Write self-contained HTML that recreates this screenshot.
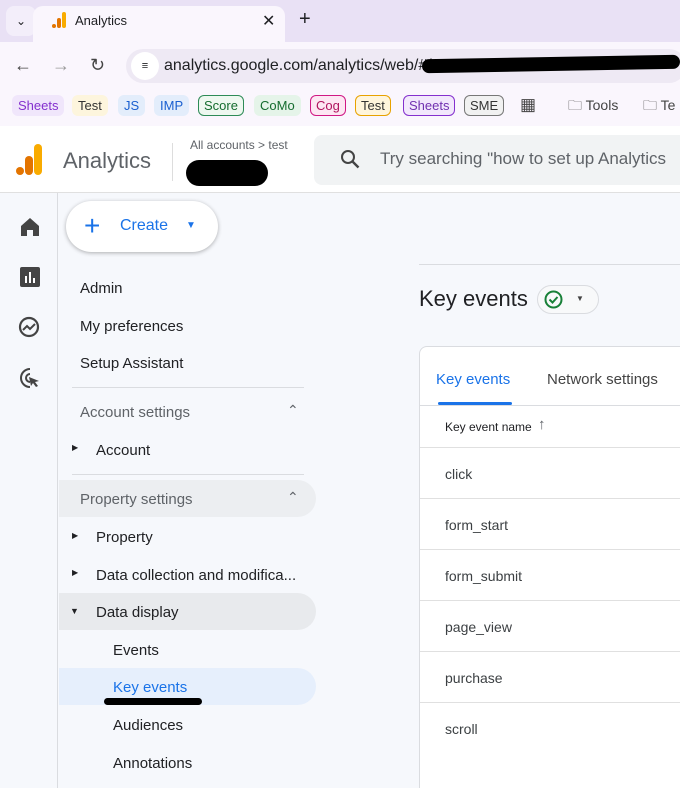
<!DOCTYPE html><html style="width:680px;height:788px;overflow:hidden"><head><style>
*{box-sizing:border-box;margin:0;padding:0}
body{width:680px;height:788px;overflow:hidden;font-family:"Liberation Sans",sans-serif;background:#f6f8fc;position:relative;color:#202124}
.a{position:absolute}
.bm{position:absolute;top:95px;height:21px;border-radius:6px;font-size:13px;line-height:19px;padding:0 5px;border:1px solid transparent}
.nav{position:absolute;left:80px;font-size:15px;color:#202124;margin-top:1px}
.row{position:absolute;left:420px;width:260px;height:51px;border-bottom:1px solid #e0e0e0;font-size:14px;color:#3c4043;padding:18px 0 0 25px;background:#fff}
</style></head><body>
<div class="a" style="left:0;top:0;width:680px;height:42px;background:#e9e1f5"></div>
<div class="a" style="left:6px;top:6px;width:30px;height:30px;border-radius:8px;background:#f3eefa;font-size:12px;text-align:center;line-height:30px">&#8964;</div>
<div class="a" style="left:33px;top:6px;width:252px;height:38px;border-radius:10px 10px 0 0;background:#faf6fd"></div>
<svg class="a" style="left:52px;top:12px" width="14" height="16"><rect x="10" y="0" width="4" height="16" rx="2" fill="#f9ab00"/><rect x="5" y="6" width="4" height="10" rx="2" fill="#e37400"/><circle cx="2" cy="14" r="2" fill="#e37400"/></svg>
<div class="a" style="left:75px;top:13px;font-size:13px">Analytics</div>
<div class="a" style="left:262px;top:11px;font-size:16px">&#10005;</div>
<div class="a" style="left:299px;top:8px;font-size:20px">+</div>
<div class="a" style="left:0;top:42px;width:680px;height:84px;background:#faf6fd"></div>
<div class="a" style="left:14px;top:55px;font-size:18px;color:#444">&#8592;</div>
<div class="a" style="left:52px;top:55px;font-size:18px;color:#999">&#8594;</div>
<div class="a" style="left:90px;top:55px;font-size:18px;color:#444">&#8635;</div>
<div class="a" style="left:126px;top:49px;width:560px;height:34px;border-radius:17px;background:#eee9f4"></div>
<div class="a" style="left:131px;top:52px;width:28px;height:28px;border-radius:14px;background:#fff;font-size:11px;text-align:center;line-height:28px">&#8801;</div>
<div class="a" style="left:164px;top:57px;font-size:16px;color:#202124">analytics.google.com/analytics/web/#/</div>
<div class="a" style="left:422px;top:57px;width:258px;height:14px;border-radius:7px;background:#000;transform:rotate(-1deg)"></div>
<div class="bm" style="left:12px;background:#f0e6fb;color:#8430ce">Sheets</div>
<div class="bm" style="left:72px;background:#fdf5dd;color:#333">Test</div>
<div class="bm" style="left:118px;background:#e3edfb;color:#1a5fd0">JS</div>
<div class="bm" style="left:154px;background:#e3edfb;color:#1a5fd0">IMP</div>
<div class="bm" style="left:198px;border-color:#2e8b57;background:#eef8f0;color:#146c2e">Score</div>
<div class="bm" style="left:254px;background:#e5f4e9;color:#146c2e">CoMo</div>
<div class="bm" style="left:310px;border-color:#d01884;background:#fde7f3;color:#b0145e">Cog</div>
<div class="bm" style="left:355px;border-color:#e8a200;background:#fff5dc;color:#333">Test</div>
<div class="bm" style="left:403px;border-color:#8430ce;background:#f2e8fc;color:#7030b0">Sheets</div>
<div class="bm" style="left:464px;border-color:#777;background:#f1f1f1;color:#333">SME</div>
<div class="a" style="left:520px;top:95px;font-size:17px;color:#444">&#9638;</div>
<div class="a" style="left:568px;top:95px;font-size:14px;color:#444">&#128448; Tools</div>
<div class="a" style="left:643px;top:95px;font-size:14px;color:#444">&#128448; Te</div>
<div class="a" style="left:0;top:126px;width:680px;height:67px;background:#fff;border-bottom:1px solid #e0e0e0"></div>
<svg class="a" style="left:16px;top:144px" width="28" height="32"><rect x="18" y="0" width="8" height="31" rx="4" fill="#f9ab00"/><rect x="9" y="12" width="8" height="19" rx="4" fill="#e37400"/><circle cx="4" cy="27" r="4" fill="#e37400"/></svg>
<div class="a" style="left:63px;top:148px;font-size:22px;color:#5f6368">Analytics</div>
<div class="a" style="left:172px;top:143px;width:1px;height:38px;background:#ddd"></div>
<div class="a" style="left:190px;top:138px;font-size:12px;color:#5f6368">All accounts &gt; test</div>
<div class="a" style="left:186px;top:160px;width:82px;height:26px;border-radius:13px;background:#000"></div>
<div class="a" style="left:314px;top:135px;width:366px;height:50px;border-radius:8px 0 0 8px;background:#f1f3f4"></div>
<svg class="a" style="left:340px;top:149px" width="22" height="22"><circle cx="8" cy="8" r="6" fill="none" stroke="#444" stroke-width="2"/><path d="M12.5 12.5l6 6" stroke="#444" stroke-width="2.4"/></svg>
<div class="a" style="left:380px;top:149px;font-size:17px;color:#5f6368;white-space:nowrap">Try searching "how to set up Analytics</div>
<div class="a" style="left:0;top:193px;width:58px;height:595px;background:#f6f8fc;border-right:1px solid #dadce0"></div>
<svg class="a" style="left:20px;top:217px" width="20" height="20"><path d="M1 9L10 1l9 8v10h-6v-6H7v6H1z" fill="#444"/></svg>
<svg class="a" style="left:20px;top:267px" width="20" height="20"><rect x="0" y="0" width="20" height="20" rx="2" fill="#444"/><rect x="5" y="9" width="2" height="7" fill="#fff"/><rect x="9" y="5" width="2" height="11" fill="#fff"/><rect x="13" y="11" width="2" height="5" fill="#fff"/></svg>
<svg class="a" style="left:18px;top:316px" width="24" height="24"><circle cx="11" cy="11" r="9" fill="none" stroke="#444" stroke-width="2.2"/><path d="M5 14l4-4 3 3 5-5" fill="none" stroke="#444" stroke-width="2"/></svg>
<svg class="a" style="left:18px;top:366px" width="24" height="24"><path d="M12 3a9 9 0 1 0 0 18" fill="none" stroke="#444" stroke-width="2"/><path d="M12 8a4 4 0 1 0 0 8" fill="none" stroke="#444" stroke-width="2"/><path d="M11 11l10 4-4 1 3 4-2 1-3-4-2 3z" fill="#444"/></svg>
<div class="a" style="left:66px;top:201px;width:152px;height:51px;border-radius:26px;background:#fff;box-shadow:0 1px 4px rgba(0,0,0,.3)"></div>
<div class="a" style="left:84px;top:210px;font-size:28px;color:#1a73e8;font-weight:300">+</div>
<div class="a" style="left:120px;top:217px;font-size:16px;color:#1a73e8">Create</div>
<div class="a" style="left:186px;top:220px;font-size:10px;color:#1a73e8">&#9660;</div>
<div class="nav" style="top:279px">Admin</div>
<div class="nav" style="top:317px">My preferences</div>
<div class="nav" style="top:354px">Setup Assistant</div>
<div class="a" style="left:72px;top:387px;width:232px;height:1px;background:#dadce0"></div>
<div class="nav" style="top:403px;color:#5f6368">Account settings</div>
<div class="a" style="left:287px;top:402px;font-size:14px;color:#5f6368">&#8963;</div>
<div class="a" style="left:72px;top:443px;font-size:8px">&#9654;</div>
<div class="nav" style="left:96px;top:441px">Account</div>
<div class="a" style="left:72px;top:474px;width:232px;height:1px;background:#dadce0"></div>
<div class="a" style="left:59px;top:480px;width:257px;height:37px;border-radius:0 19px 19px 0;background:#eceef1"></div>
<div class="nav" style="top:490px;color:#5f6368">Property settings</div>
<div class="a" style="left:287px;top:489px;font-size:14px;color:#5f6368">&#8963;</div>
<div class="a" style="left:72px;top:531px;font-size:8px">&#9654;</div>
<div class="nav" style="left:96px;top:528px">Property</div>
<div class="a" style="left:72px;top:568px;font-size:8px">&#9654;</div>
<div class="nav" style="left:96px;top:566px">Data collection and modifica...</div>
<div class="a" style="left:59px;top:593px;width:257px;height:37px;border-radius:0 19px 19px 0;background:#e8eaed"></div>
<div class="a" style="left:70px;top:606px;font-size:9px">&#9660;</div>
<div class="nav" style="left:96px;top:603px">Data display</div>
<div class="nav" style="left:113px;top:641px">Events</div>
<div class="a" style="left:59px;top:668px;width:257px;height:37px;border-radius:0 19px 19px 0;background:#e6effc"></div>
<div class="nav" style="left:113px;top:678px;color:#1a73e8">Key events</div>
<div class="a" style="left:104px;top:698px;width:98px;height:7px;border-radius:4px;background:#000"></div>
<div class="nav" style="left:113px;top:716px">Audiences</div>
<div class="nav" style="left:113px;top:754px">Annotations</div>
<div class="a" style="left:419px;top:264px;width:261px;height:1px;background:#dadce0"></div>
<div class="a" style="left:419px;top:286px;font-size:22px;color:#202124">Key events</div>
<div class="a" style="left:537px;top:285px;width:62px;height:29px;border-radius:15px;border:1px solid #dadce0;background:#f8f9fa"></div>
<svg class="a" style="left:543px;top:289px" width="21" height="21"><circle cx="10.5" cy="10.5" r="8" fill="none" stroke="#188038" stroke-width="2"/><path d="M6.5 10.5l3 3 5-5.5" fill="none" stroke="#188038" stroke-width="2"/></svg>
<div class="a" style="left:576px;top:294px;font-size:8px;color:#444">&#9660;</div>
<div class="a" style="left:419px;top:346px;width:261px;height:442px;border-radius:8px 0 0 0;background:#fff;border:1px solid #dadce0;border-right:none;border-bottom:none"></div>
<div class="a" style="left:436px;top:371px;font-size:15px;color:#1a73e8">Key events</div>
<div class="a" style="left:547px;top:371px;font-size:15px;color:#444">Network settings</div>
<div class="a" style="left:438px;top:402px;width:74px;height:3px;background:#1a73e8;border-radius:2px"></div>
<div class="a" style="left:420px;top:405px;width:260px;height:1px;background:#dadce0"></div>
<div class="a" style="left:445px;top:420px;font-size:12px;color:#202124">Key event name</div>
<div class="a" style="left:538px;top:416px;font-size:15px;color:#5f6368">&#8593;</div>
<div class="a" style="left:420px;top:447px;width:260px;height:1px;background:#e0e0e0"></div>
<div class="row" style="top:448px">click</div>
<div class="row" style="top:499px">form_start</div>
<div class="row" style="top:550px">form_submit</div>
<div class="row" style="top:601px">page_view</div>
<div class="row" style="top:652px">purchase</div>
<div class="row" style="top:703px;border:none;height:85px">scroll</div>
</body></html>
